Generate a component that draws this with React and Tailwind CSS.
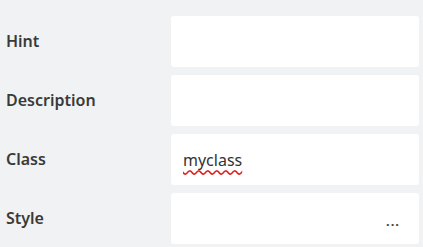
const rows = [
  { label: "Hint", value: "" },
  { label: "Description", value: "" },
  { label: "Class", value: "myclass" },
  { label: "Style", value: "", more: true },
];

export default function App() {
  return (
    <div
      className="w-[423px] h-[247px] bg-[#f1f2f4] pt-4 pl-[6px] pr-1 flex flex-col gap-2 overflow-hidden"
      style={{ fontFamily: '"Noto Sans", "Open Sans", sans-serif' }}
    >
      {rows.map((row) => (
        <div key={row.label} className="flex items-center h-[51px]">
          <div className="w-[165px] text-[16px] font-semibold text-[#3a3a3a] -mt-[2px]">{row.label}</div>
          <div className="flex-1 h-full bg-white rounded-[3px] flex items-center px-3">
            {row.value && (
              <span className="text-[16px] text-[#333] underline decoration-wavy decoration-[#e02020] underline-offset-4">
                {row.value}
              </span>
            )}
            {row.more && (
              <span className="ml-auto mr-[7px] mt-[6px] text-[13px] font-bold tracking-[1px] text-[#444]">...</span>
            )}
          </div>
        </div>
      ))}
    </div>
  );
}
